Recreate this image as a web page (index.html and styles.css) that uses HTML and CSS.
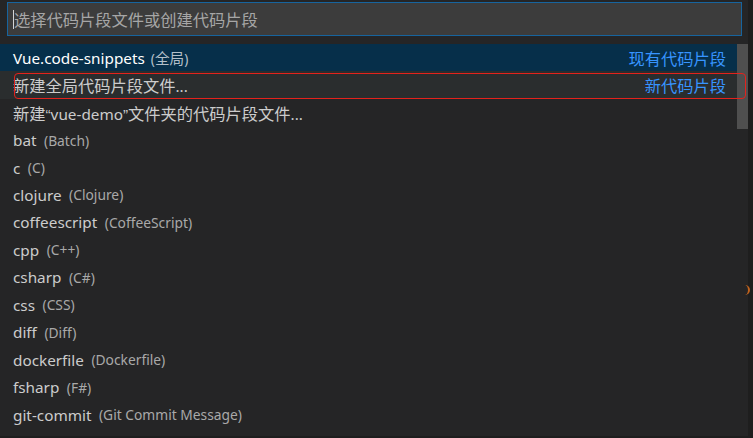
FILE: index.html
```html
<!DOCTYPE html>
<html lang="zh-CN">
<head>
<meta charset="utf-8">
<title>Quick Pick</title>
<link rel="stylesheet" href="styles.css">
</head>
<body>
<div class="screen">
  <div class="widget">
    <div class="input-wrap">
      <div class="input"><span class="caret"></span><span class="placeholder">选择代码片段文件或创建代码片段</span></div>
    </div>
    <div class="list-area">
      <ul class="list">
        <li class="row selected"><span class="label">Vue.code-snippets</span><span class="desc">(<span class="cjk-s">全局</span>)</span><span class="sep">现有代码片段</span></li>
        <li class="row hover"><span class="label"><span class="cjk">新建全局代码片段文件</span>...</span><span class="sep">新代码片段</span></li>
        <li class="row"><span class="label"><span class="cjk">新建</span><span class="quote">“</span>vue-demo<span class="quote">”</span><span class="cjk">文件夹的代码片段文件</span>...</span></li>
        <li class="row"><span class="label">bat</span><span class="desc">(Batch)</span></li>
        <li class="row"><span class="label">c</span><span class="desc">(C)</span></li>
        <li class="row"><span class="label">clojure</span><span class="desc">(Clojure)</span></li>
        <li class="row"><span class="label">coffeescript</span><span class="desc">(CoffeeScript)</span></li>
        <li class="row"><span class="label">cpp</span><span class="desc">(C++)</span></li>
        <li class="row"><span class="label">csharp</span><span class="desc">(C#)</span></li>
        <li class="row"><span class="label">css</span><span class="desc">(CSS)</span></li>
        <li class="row"><span class="label">diff</span><span class="desc">(Diff)</span></li>
        <li class="row"><span class="label">dockerfile</span><span class="desc">(Dockerfile)</span></li>
        <li class="row"><span class="label">fsharp</span><span class="desc">(F#)</span></li>
        <li class="row"><span class="label">git-commit</span><span class="desc">(Git Commit Message)</span></li>
      </ul>
      <div class="scrollbar"></div>
      <div class="annotation"></div>
    </div>
  </div>
  <div class="edge"><span class="bracket"></span></div>
</div>
</body>
</html>
```
FILE: styles.css
```css
html, body {
  margin: 0;
  padding: 0;
  background: #1e1e1e;
}
body {
  width: 753px;
  height: 438px;
  overflow: hidden;
  font-family: "Noto Sans", "Noto Sans CJK SC", sans-serif;
  font-size: 16.25px;
  color: #cccccc;
}
.screen {
  display: flex;
  height: 436px;
}
.widget {
  width: 748px;
  height: 436px;
  background: #252526;
  display: flex;
  flex-direction: column;
  overflow: hidden;
}
.input-wrap {
  padding: 2px 6px 0 7px;
  height: 44px;
  flex: none;
  box-sizing: border-box;
}
.input {
  height: 34px;
  box-sizing: border-box;
  border: 1px solid #17649e;
  background: #3c3c3c;
  display: flex;
  align-items: center;
  padding-left: 5px;
}
.caret {
  width: 1px;
  height: 19px;
  background: #d4d4d4;
}
.placeholder {
  color: #a6a6a6;
  font-family: "Noto Sans CJK SC", sans-serif;
  font-size: 16.25px;
}
.list-area {
  position: relative;
  flex: 1;
  overflow: hidden;
}
.list {
  list-style: none;
  margin: 0;
  padding: 0;
  width: 737px;
}
.row {
  height: 27.46px;
  display: flex;
  align-items: center;
  padding: 0 11px 0 13px;
  white-space: nowrap;
  box-sizing: border-box;
}
.row.selected {
  background: #062f4a;
  color: #ffffff;
}
.row.hover {
  background: #2a2d2e;
}
.label {
  font-size: 15.3px;
}
.cjk {
  font-family: "Noto Sans CJK SC", sans-serif;
  font-size: 16.25px;
}
.quote {
  font-family: "Liberation Sans", sans-serif;
}
.cjk-s {
  font-family: "Noto Sans CJK SC", sans-serif;
  font-size: 14.6px;
}
.desc {
  margin-left: 7.5px;
  font-size: 13.8px;
  color: #a9a9a9;
}
.row.selected .desc {
  margin-left: 6px;
  color: #b3bfc9;
}
.sep {
  margin-left: auto;
  color: #3794ff;
  font-family: "Noto Sans CJK SC", sans-serif;
  font-size: 16.25px;
}
.scrollbar {
  position: absolute;
  left: 737px;
  top: 0;
  width: 11px;
  height: 85px;
  background: #4f4f4f;
}
.annotation {
  position: absolute;
  left: 14px;
  top: 29px;
  width: 732px;
  height: 26px;
  box-sizing: border-box;
  border: 1.5px solid #e3221c;
  border-radius: 4px;
}
.edge {
  width: 5px;
  height: 436px;
  background: #1e1e1e;
  position: relative;
}
.bracket {
  position: absolute;
  left: -3px;
  top: 285px;
  width: 5px;
  height: 10px;
  box-sizing: border-box;
  border-right: 2px solid #c0621c;
  border-radius: 0 6px 6px 0;
}
```
